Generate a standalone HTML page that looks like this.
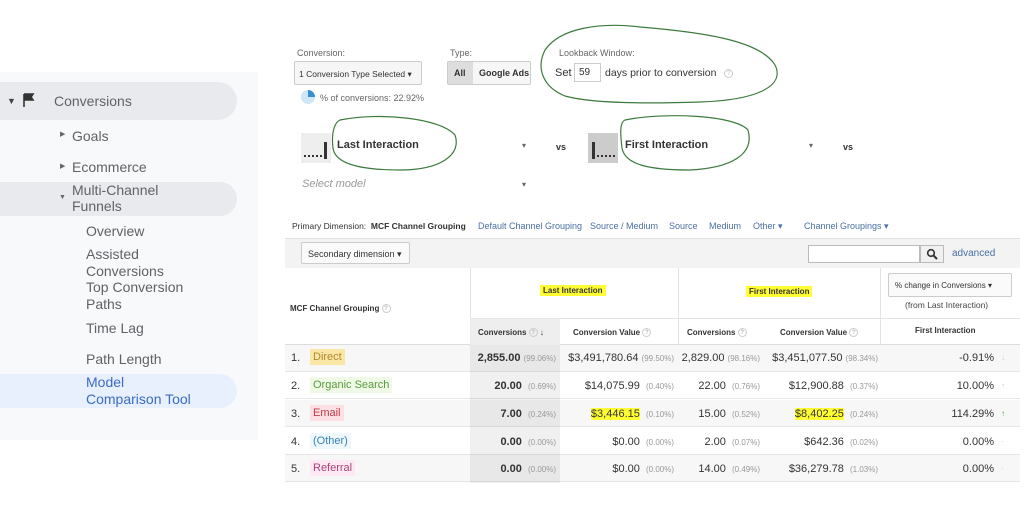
<!DOCTYPE html>
<html><head><meta charset="utf-8"><style>
*{margin:0;padding:0;box-sizing:border-box}
body{width:1024px;height:512px;background:#fff;font-family:"Liberation Sans",sans-serif;position:relative;overflow:hidden;color:#333}
.a{position:absolute;white-space:nowrap}
.side{position:absolute;left:0;top:72px;width:258px;height:368px;background:#f8f9fa}
.pill{position:absolute;left:0;width:237px;border-radius:0 20px 20px 0;background:#e8eaed}
.nav{font-size:14px;color:#5f6368}
.s{font-size:9px;color:#666}
.lnk{font-size:9px;color:#4a6fa5}
.btn{position:absolute;border:1px solid #ccc;border-radius:2px;background:#f6f6f6;font-size:9px;color:#333;white-space:nowrap;overflow:hidden}
.q{display:inline-block;width:9px;height:9px;border:1px solid #ccc;border-radius:50%;font-size:6px;color:#bbb;text-align:center;line-height:8px;vertical-align:middle}
.row{position:absolute;left:285px;width:735px;height:27px;border-bottom:1px solid #e6e6e6;font-size:11px;color:#333}
.p{font-size:8px;color:#999}
.hl{background:#ffff33}
.w{position:absolute;left:0;top:0;width:1024px;height:512px;font-size:11px}
</style></head><body>
<div class="side"></div>
<div class="pill" style="top:82px;height:38px"></div>
<div class="pill" style="top:182px;height:34px"></div>
<div class="pill" style="top:374px;height:34px;background:#e8f0fe"></div>
<div class="a" style="left:7px;top:96px;font-size:9px;color:#444">▼</div>
<svg class="a" style="left:22px;top:93px" width="14" height="14" viewBox="0 0 14 14"><path d="M2 1v13M2 1h9l-2 3 2 3H2" fill="#333" stroke="#333" stroke-width="1.6"/></svg>
<div class="a nav" style="left:54px;top:93px">Conversions</div>
<div class="a" style="left:60px;top:130px;font-size:7px;color:#666">▶</div>
<div class="a nav" style="left:72px;top:128px">Goals</div>
<div class="a" style="left:60px;top:162px;font-size:7px;color:#666">▶</div>
<div class="a nav" style="left:72px;top:159px">Ecommerce</div>
<div class="a" style="left:59px;top:194px;font-size:7px;color:#666">▼</div>
<div class="a nav" style="left:72px;top:182px;line-height:16px">Multi-Channel<br>Funnels</div>
<div class="a nav" style="left:86px;top:223px">Overview</div>
<div class="a nav" style="left:86px;top:246px;line-height:16.5px">Assisted<br>Conversions<br>Top Conversion<br>Paths</div>
<div class="a nav" style="left:86px;top:320px">Time Lag</div>
<div class="a nav" style="left:86px;top:351px">Path Length</div>
<div class="a nav" style="left:86px;top:374px;line-height:16.5px;color:#3c6bc4">Model<br>Comparison Tool</div>

<div class="a s" style="left:297px;top:48px">Conversion:</div>
<div class="btn" style="left:294px;top:61px;width:128px;height:24px;padding:7px 4px;font-size:8.5px">1 Conversion Type Selected ▾</div>
<div class="a" style="left:301px;top:90px;width:14px;height:14px;border-radius:50%;background:#cfe7f7"></div>
<div class="a" style="left:308px;top:90px;width:7px;height:7px;border-radius:0 7px 0 0;background:#3a8fd0"></div>
<div class="a s" style="left:320px;top:93px;font-size:9px">% of conversions: 22.92%</div>
<div class="a s" style="left:450px;top:48px">Type:</div>
<div class="btn" style="left:447px;top:61px;width:84px;height:24px"></div>
<div class="a" style="left:448px;top:62px;width:25px;height:22px;background:#ddd"></div>
<div class="a" style="left:454px;top:68px;font-size:9px;font-weight:bold">All</div>
<div class="a" style="left:479px;top:68px;font-size:9px;font-weight:bold">Google Ads</div>
<div class="a s" style="left:559px;top:48px">Lookback Window:</div>
<div class="a" style="left:555px;top:67px;font-size:11px">Set</div>
<div class="a" style="left:574px;top:63px;width:27px;height:19px;border:1px solid #ccc;font-size:10px;padding:3px 4px">59</div>
<div class="a" style="left:605px;top:67px;font-size:10.5px">days prior to conversion</div>
<div class="a" style="left:724px;top:65px"><span class="q">?</span></div>
<svg class="a" style="left:0;top:0" width="1024" height="512"><g fill="none" stroke="#3d7a3d" stroke-width="1.2">
<path d="M545 50C560 28 600 22 640 27C700 32 760 40 775 65C785 85 760 100 700 102C640 104 590 103 565 96C545 88 535 70 545 50Z"/>
<path d="M340 120C380 112 440 118 455 135C462 155 440 170 400 170C365 170 335 165 333 148C331 132 335 122 340 120Z"/>
<path d="M625 120C665 112 735 115 748 130C755 155 730 168 690 170C650 170 625 165 622 148C620 132 620 122 625 120Z"/>
</g></svg>
<div class="a" style="left:301px;top:133px;width:30px;height:30px;background:#eee"></div>
<div class="a" style="left:304px;top:155px;width:18px;height:2px;border-bottom:2px dotted #333"></div>
<div class="a" style="left:324px;top:142px;width:3px;height:17px;background:#333"></div>
<div class="a" style="left:337px;top:139px;font-size:11px;font-weight:bold">Last Interaction</div>
<div class="a" style="left:522px;top:141px;font-size:8px;color:#666">▾</div>
<div class="a" style="left:556px;top:142px;font-size:9px;font-weight:bold">vs</div>
<div class="a" style="left:588px;top:133px;width:30px;height:30px;background:#ccc"></div>
<div class="a" style="left:592px;top:142px;width:3px;height:17px;background:#333"></div>
<div class="a" style="left:597px;top:155px;width:18px;height:2px;border-bottom:2px dotted #333"></div>
<div class="a" style="left:625px;top:139px;font-size:11px;font-weight:bold">First Interaction</div>
<div class="a" style="left:809px;top:141px;font-size:8px;color:#666">▾</div>
<div class="a" style="left:843px;top:142px;font-size:9px;font-weight:bold">vs</div>
<div class="a" style="left:302px;top:178px;font-size:11px;font-style:italic;color:#999">Select model</div>
<div class="a" style="left:522px;top:180px;font-size:8px;color:#666">▾</div>

<div class="a" style="left:292px;top:221px;font-size:8.5px;color:#333">Primary Dimension: &nbsp;<b>MCF Channel Grouping</b></div>
<div class="a lnk" style="left:478px;top:221px">Default Channel Grouping</div>
<div class="a lnk" style="left:590px;top:221px">Source / Medium</div>
<div class="a lnk" style="left:669px;top:221px">Source</div>
<div class="a lnk" style="left:709px;top:221px">Medium</div>
<div class="a lnk" style="left:753px;top:221px">Other ▾</div>
<div class="a lnk" style="left:804px;top:221px">Channel Groupings ▾</div>
<div class="a" style="left:285px;top:238px;width:735px;height:30px;background:#f3f3f3;border-top:1px solid #e0e0e0"></div>
<div class="btn" style="left:301px;top:242px;width:109px;height:22px;padding:6px 6px;background:#fafafa">Secondary dimension ▾</div>
<div class="a" style="left:808px;top:245px;width:112px;height:18px;border:1px solid #bbb;background:#fff"></div>
<div class="a" style="left:920px;top:245px;width:24px;height:18px;border:1px solid #bbb;background:#f0f0f0"></div>
<svg class="a" style="left:926px;top:248px" width="12" height="12" viewBox="0 0 12 12"><circle cx="5" cy="5" r="3.3" fill="none" stroke="#333" stroke-width="1.6"/><path d="M7.5 7.5L11 11" stroke="#333" stroke-width="2"/></svg>
<div class="a lnk" style="left:952px;top:248px;font-size:10px">advanced</div>

<div class="a" style="left:285px;top:268px;width:735px;height:77px;border-bottom:1px solid #ddd"></div>
<div class="a" style="left:470px;top:268px;width:1px;height:77px;background:#e3e3e3"></div>
<div class="a" style="left:678px;top:268px;width:1px;height:77px;background:#e3e3e3"></div>
<div class="a" style="left:880px;top:268px;width:1px;height:77px;background:#e3e3e3"></div>
<div class="a" style="left:470px;top:318px;width:550px;height:1px;background:#e3e3e3"></div>
<div class="a" style="left:470px;top:319px;width:90px;height:26px;background:#eee"></div>
<div class="a" style="left:290px;top:304px;font-size:8px;font-weight:bold">MCF Channel Grouping <span class="q">?</span></div>
<div class="a hl" style="left:540px;top:285px;font-size:8px;font-weight:bold;padding:1px 3px">Last Interaction</div>
<div class="a hl" style="left:746px;top:286px;font-size:8px;font-weight:bold;padding:1px 3px">First Interaction</div>
<div class="btn" style="left:888px;top:273px;width:124px;height:24px;padding:7px 6px;font-size:8px;background:#fafafa">% change in Conversions ▾</div>
<div class="a" style="left:905px;top:300px;font-size:8.5px;color:#444">(from Last Interaction)</div>
<div class="a" style="left:915px;top:326px;font-size:8px;font-weight:bold">First Interaction</div>
<div class="a" style="left:478px;top:328px;font-size:8px;font-weight:bold">Conversions <span class="q">?</span> ↓</div>
<div class="a" style="left:573px;top:328px;font-size:8px;font-weight:bold">Conversion Value <span class="q">?</span></div>
<div class="a" style="left:687px;top:328px;font-size:8px;font-weight:bold">Conversions <span class="q">?</span></div>
<div class="a" style="left:780px;top:328px;font-size:8px;font-weight:bold">Conversion Value <span class="q">?</span></div>

<div class="row" style="top:345px;background:#f7f7f7"></div>
<div class="row" style="top:372px"></div>
<div class="row" style="top:400px;background:#f7f7f7"></div>
<div class="row" style="top:428px"></div>
<div class="row" style="top:455px;background:#f7f7f7"></div>
<div class="a" style="left:470px;top:345px;width:90px;height:138px;background:rgba(0,0,0,0.06)"></div>

<div class="w">
<div class="a" style="left:291px;top:352px">1.</div>
<div class="a" style="left:310px;top:349px;background:#fbe7a5;color:#b08a2a;padding:2px 3px">Direct</div>
<div class="a" style="left:291px;top:380px">2.</div>
<div class="a" style="left:310px;top:377px;background:#effae6;color:#5a9a40;padding:2px 3px">Organic Search</div>
<div class="a" style="left:291px;top:408px">3.</div>
<div class="a" style="left:310px;top:405px;background:#fde0e4;color:#c0394b;padding:2px 3px">Email</div>
<div class="a" style="left:291px;top:436px">4.</div>
<div class="a" style="left:310px;top:433px;background:#eef7fc;color:#3a84b5;padding:2px 3px">(Other)</div>
<div class="a" style="left:291px;top:463px">5.</div>
<div class="a" style="left:310px;top:460px;background:#fde8f3;color:#a8447a;padding:2px 3px">Referral</div>

<div class="a" style="right:468px;top:352px"><b>2,855.00</b> <span class="p">(99.06%)</span></div>
<div class="a" style="right:468px;top:380px"><b>20.00</b> &nbsp;<span class="p">(0.69%)</span></div>
<div class="a" style="right:468px;top:408px"><b>7.00</b> &nbsp;<span class="p">(0.24%)</span></div>
<div class="a" style="right:468px;top:436px"><b>0.00</b> &nbsp;<span class="p">(0.00%)</span></div>
<div class="a" style="right:468px;top:463px"><b>0.00</b> &nbsp;<span class="p">(0.00%)</span></div>

<div class="a" style="right:350px;top:352px">$3,491,780.64 <span class="p">(99.50%)</span></div>
<div class="a" style="right:350px;top:380px">$14,075.99 &nbsp;<span class="p">(0.40%)</span></div>
<div class="a" style="right:350px;top:408px"><span class="hl">$3,446.15</span> &nbsp;<span class="p">(0.10%)</span></div>
<div class="a" style="right:350px;top:436px">$0.00 &nbsp;<span class="p">(0.00%)</span></div>
<div class="a" style="right:350px;top:463px">$0.00 &nbsp;<span class="p">(0.00%)</span></div>

<div class="a" style="right:264px;top:352px">2,829.00 <span class="p">(98.16%)</span></div>
<div class="a" style="right:264px;top:380px">22.00 &nbsp;<span class="p">(0.76%)</span></div>
<div class="a" style="right:264px;top:408px">15.00 &nbsp;<span class="p">(0.52%)</span></div>
<div class="a" style="right:264px;top:436px">2.00 &nbsp;<span class="p">(0.07%)</span></div>
<div class="a" style="right:264px;top:463px">14.00 &nbsp;<span class="p">(0.49%)</span></div>

<div class="a" style="right:146px;top:352px">$3,451,077.50 <span class="p">(98.34%)</span></div>
<div class="a" style="right:146px;top:380px">$12,900.88 &nbsp;<span class="p">(0.37%)</span></div>
<div class="a" style="right:146px;top:408px"><span class="hl">$8,402.25</span> &nbsp;<span class="p">(0.24%)</span></div>
<div class="a" style="right:146px;top:436px">$642.36 &nbsp;<span class="p">(0.02%)</span></div>
<div class="a" style="right:146px;top:463px">$36,279.78 &nbsp;<span class="p">(1.03%)</span></div>

<div class="a" style="right:30px;top:352px">-0.91%</div>
<div class="a" style="right:30px;top:380px">10.00%</div>
<div class="a" style="right:30px;top:408px">114.29%</div>
<div class="a" style="right:30px;top:436px">0.00%</div>
<div class="a" style="right:30px;top:463px">0.00%</div>
<div class="a" style="left:1001px;top:353px;font-size:8px;color:#ccc">↓</div>
<div class="a" style="left:1001px;top:381px;font-size:8px;color:#ccc">↑</div>
<div class="a" style="left:1001px;top:409px;font-size:8px;color:#3a3">↑</div>
<div class="a" style="left:1001px;top:437px;font-size:8px;color:#ccc">·</div>
<div class="a" style="left:1001px;top:464px;font-size:8px;color:#ccc">·</div>
</div>
</body></html>
